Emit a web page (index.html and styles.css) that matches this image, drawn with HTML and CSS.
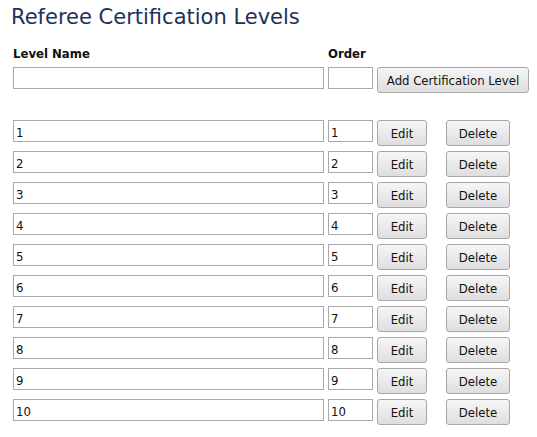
FILE: index.html
```html
<!DOCTYPE html>
<html>
<head>
<meta charset="utf-8">
<link rel="stylesheet" href="styles.css">
</head>
<body>
<h1 class="title">Referee Certification Levels</h1>
<div class="form">
  <div class="labels">
    <span class="lbl lbl-name">Level Name</span>
    <span class="lbl lbl-order">Order</span>
  </div>
  <div class="row add-row">
    <input class="in-name" type="text" value="">
    <input class="in-order" type="text" value="">
    <button class="btn btn-add">Add Certification Level</button>
  </div>
</div>
<div class="list">
  <div class="row"><input class="in-name" type="text" value="1"><input class="in-order" type="text" value="1"><button class="btn btn-edit">Edit</button><button class="btn btn-del">Delete</button></div>
  <div class="row"><input class="in-name" type="text" value="2"><input class="in-order" type="text" value="2"><button class="btn btn-edit">Edit</button><button class="btn btn-del">Delete</button></div>
  <div class="row"><input class="in-name" type="text" value="3"><input class="in-order" type="text" value="3"><button class="btn btn-edit">Edit</button><button class="btn btn-del">Delete</button></div>
  <div class="row"><input class="in-name" type="text" value="4"><input class="in-order" type="text" value="4"><button class="btn btn-edit">Edit</button><button class="btn btn-del">Delete</button></div>
  <div class="row"><input class="in-name" type="text" value="5"><input class="in-order" type="text" value="5"><button class="btn btn-edit">Edit</button><button class="btn btn-del">Delete</button></div>
  <div class="row"><input class="in-name" type="text" value="6"><input class="in-order" type="text" value="6"><button class="btn btn-edit">Edit</button><button class="btn btn-del">Delete</button></div>
  <div class="row"><input class="in-name" type="text" value="7"><input class="in-order" type="text" value="7"><button class="btn btn-edit">Edit</button><button class="btn btn-del">Delete</button></div>
  <div class="row"><input class="in-name" type="text" value="8"><input class="in-order" type="text" value="8"><button class="btn btn-edit">Edit</button><button class="btn btn-del">Delete</button></div>
  <div class="row"><input class="in-name" type="text" value="9"><input class="in-order" type="text" value="9"><button class="btn btn-edit">Edit</button><button class="btn btn-del">Delete</button></div>
  <div class="row"><input class="in-name" type="text" value="10"><input class="in-order" type="text" value="10"><button class="btn btn-edit">Edit</button><button class="btn btn-del">Delete</button></div>
</div>
</body>
</html>
```

FILE: styles.css
```css
body {
  margin: 0;
  padding: 0 0 0 13px;
  background: #ffffff;
  font-family: "DejaVu Sans Condensed", "DejaVu Sans", sans-serif;
  font-size: 13px;
  color: #111;
}
.title {
  margin: 0 0 0 -2px;
  padding-top: 5px;
  height: 41px;
  font-family: "DejaVu Sans", Verdana, sans-serif;
  font-weight: normal;
  font-size: 21px;
  line-height: 25px;
  color: #1e3157;
}
.labels {
  display: flex;
  height: 21px;
  align-items: flex-start;
}
.lbl {
  font-weight: bold;
  font-size: 13px;
  line-height: 16px;
}
.lbl-name { width: 315px; }
.row {
  display: flex;
  align-items: flex-start;
  height: 26px;
}
.add-row { margin-bottom: 27px; }
.list {
  display: flex;
  flex-direction: column;
  gap: 5px;
}
input {
  box-sizing: border-box;
  height: 22px;
  margin: 0;
  border: 1px solid #a9a9a9;
  padding: 3px 2px 0 2px;
  font-family: "DejaVu Sans Condensed", "DejaVu Sans", sans-serif;
  font-size: 13px;
  color: #111;
  background: #fff;
  outline: none;
}
.in-name { width: 311px; margin-right: 4px; }
.in-order { width: 45px; margin-right: 4px; }
.btn {
  box-sizing: border-box;
  height: 26px;
  margin: 0;
  padding: 0 6px;
  border: 1px solid #a7a7a7;
  border-radius: 3px;
  background: linear-gradient(#f6f6f6, #dedede);
  font-family: "DejaVu Sans Condensed", "DejaVu Sans", sans-serif;
  font-size: 13px;
  color: #111;
}
.btn-add { width: 152px; }
.btn-edit { width: 50px; margin-right: 19px; }
.btn-del { width: 64px; }
```
